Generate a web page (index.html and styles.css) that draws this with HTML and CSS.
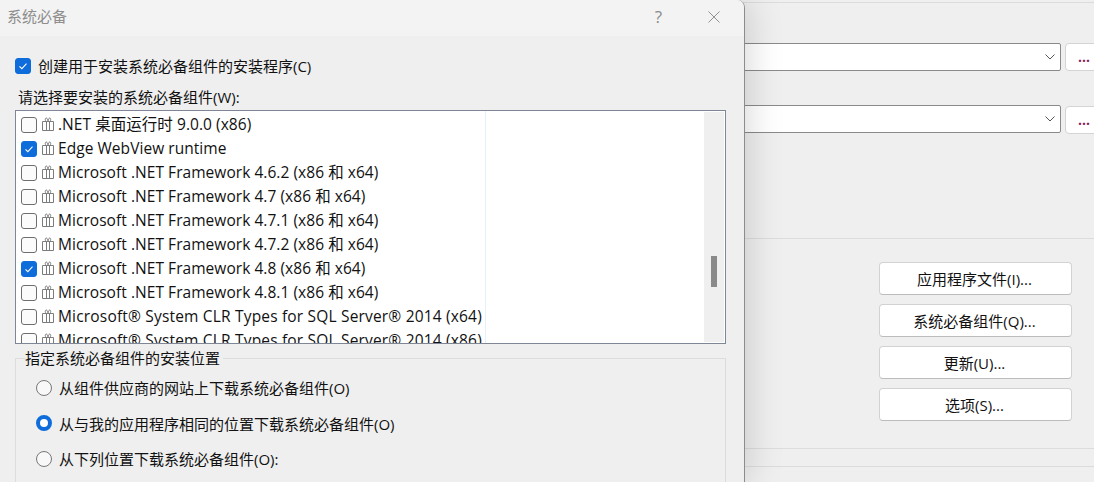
FILE: index.html
```html
<!DOCTYPE html>
<html lang="zh-CN">
<head>
<meta charset="utf-8">
<title>系统必备</title>
<link rel="stylesheet" href="styles.css">
</head>
<body>
<svg class="defs" width="0" height="0" aria-hidden="true">
  <symbol id="gift" viewBox="0 0 12 14">
    <path d="M.5 4.500h11v9H.5zM4.500 4.500v9M7.500 4.500v9M4 4.500C2.800 3 3.200 .8 4.400 1 5.400 1.200 5.800 3 6 4.500 6.200 3 6.600 1.200 7.600 1 8.800 .8 9.200 3 8 4.500" fill="none" stroke="#7c7c7c" stroke-width="1"/>
  </symbol>
  <symbol id="tick" viewBox="0 0 16 16">
    <path d="M4 8.300l2.700 2.700L12 5.400" fill="none" stroke="#fff" stroke-width="1.200"/>
  </symbol>
</svg>
<div class="window">
  <section class="back-top">
    <div class="combo-row">
      <div class="combo"><svg class="chev" viewBox="0 0 10 6"><path d="M.5.5L5 5 9.500.5" fill="none" stroke="#555" stroke-width="1"/></svg></div>
      <div class="dots">...</div>
    </div>
    <div class="combo-row second">
      <div class="combo"><svg class="chev" viewBox="0 0 10 6"><path d="M.5.5L5 5 9.500.5" fill="none" stroke="#555" stroke-width="1"/></svg></div>
      <div class="dots">...</div>
    </div>
  </section>
  <section class="back-buttons">
    <div class="btn">应用程序文件(I)...</div>
    <div class="btn">系统必备组件(Q)...</div>
    <div class="btn">更新(U)...</div>
    <div class="btn">选项(S)...</div>
  </section>
  <section class="back-strip"></section>
  <section class="back-end"></section>

  <div class="dialog">
    <header class="titlebar">
      <span class="title">系统必备</span>
      <span class="help">?</span>
      <svg class="close" viewBox="0 0 13 13"><path d="M.5.5l12 12M12.500.5l-12 12" fill="none" stroke="#8a8a8a" stroke-width="1"/></svg>
    </header>
    <div class="dialog-body">
      <div class="create">
        <span class="cb on big"><svg><use href="#tick"/></svg></span>
        <span>创建用于安装系统必备组件的安装程序(C)</span>
      </div>
      <div class="prompt">请选择要安装的系统必备组件(W):</div>
      <div class="list">
        <div class="rows">
          <div class="row"><span class="cb"></span><svg class="gift"><use href="#gift"/></svg><span>.NET 桌面运行时 9.0.0 (x86)</span></div>
          <div class="row"><span class="cb on"><svg><use href="#tick"/></svg></span><svg class="gift"><use href="#gift"/></svg><span>Edge WebView runtime</span></div>
          <div class="row"><span class="cb"></span><svg class="gift"><use href="#gift"/></svg><span>Microsoft .NET Framework 4.6.2 (x86 和 x64)</span></div>
          <div class="row"><span class="cb"></span><svg class="gift"><use href="#gift"/></svg><span>Microsoft .NET Framework 4.7 (x86 和 x64)</span></div>
          <div class="row"><span class="cb"></span><svg class="gift"><use href="#gift"/></svg><span>Microsoft .NET Framework 4.7.1 (x86 和 x64)</span></div>
          <div class="row"><span class="cb"></span><svg class="gift"><use href="#gift"/></svg><span>Microsoft .NET Framework 4.7.2 (x86 和 x64)</span></div>
          <div class="row"><span class="cb on"><svg><use href="#tick"/></svg></span><svg class="gift"><use href="#gift"/></svg><span>Microsoft .NET Framework 4.8 (x86 和 x64)</span></div>
          <div class="row"><span class="cb"></span><svg class="gift"><use href="#gift"/></svg><span>Microsoft .NET Framework 4.8.1 (x86 和 x64)</span></div>
          <div class="row"><span class="cb"></span><svg class="gift"><use href="#gift"/></svg><span class="wide">Microsoft® System CLR Types for SQL Server® 2014 (x64)</span></div>
          <div class="row"><span class="cb"></span><svg class="gift"><use href="#gift"/></svg><span class="wide">Microsoft® System CLR Types for SQL Server® 2014 (x86)</span></div>
        </div>
        <div class="scrollbar"><div class="thumb"></div></div>
      </div>
      <fieldset class="group">
        <legend>指定系统必备组件的安装位置</legend>
        <div class="radio"><span class="dot"></span><span>从组件供应商的网站上下载系统必备组件(O)</span></div>
        <div class="radio"><span class="dot on"></span><span>从与我的应用程序相同的位置下载系统必备组件(O)</span></div>
        <div class="radio"><span class="dot"></span><span>从下列位置下载系统必备组件(O):</span></div>
      </fieldset>
    </div>
  </div>
</div>
</body>
</html>
```
FILE: styles.css
```css
* { box-sizing: border-box; }
html, body { margin: 0; height: 100%; overflow: hidden; }
body {
  font-family: "Open Sans", "Noto Sans CJK SC", sans-serif;
  font-size: 15px;
  color: #111;
  background: #efefef;
}
.defs { position: absolute; }
.window { position: relative; width: 1094px; height: 482px; overflow: hidden; }

.back-top {
  margin-top: 2px;
  height: 237px;
  padding: 40px 0 0 0;
  border-top: 1px solid #dcdcdc;
  border-bottom: 1px solid #dcdcdc;
}
.combo-row { display: flex; align-items: flex-start; gap: 4px; height: 28px; }
.combo-row.second { margin-top: 34px; }
.combo {
  position: relative;
  flex: none;
  width: 1061px;
  height: 28px;
  background: #fff;
  border: 1px solid #8a8a8a;
  border-radius: 2px;
}
.chev { position: absolute; right: 5px; top: 10px; width: 10px; height: 6px; }
.dots {
  flex: none;
  width: 60px;
  height: 28px;
  background: #fff;
  border: 1px solid #d4d4d4;
  border-radius: 4px;
  color: #8a1f5a;
  line-height: 26px;
  padding-left: 12px;
  font-weight: 700;
  font-size: 14px;
}
.combo-row.second .dots { margin-top: 1px; }
.back-buttons {
  display: flex;
  flex-direction: column;
  align-items: flex-end;
  gap: 9px;
  height: 210px;
  padding: 23px 22px 0 0;
  border-bottom: 1px solid #dcdcdc;
}
.btn {
  width: 193px;
  height: 33px;
  background: #fff;
  border: 1px solid #d2d2d2;
  border-bottom-color: #bcbcbc;
  border-radius: 4px;
  text-align: center;
  line-height: 32px;
  padding-right: 2px;
}
.back-strip { height: 18px; border-bottom: 1px solid #dcdcdc; }
.back-end { height: 20px; }

.dialog {
  position: absolute;
  left: 0;
  top: 0;
  width: 745px;
  height: 482px;
  background: #efefef;
  border-right: 1px solid #8c8c8c;
  border-top-right-radius: 8px;
  box-shadow: 2px 0 36px rgba(0, 0, 0, .17);
  overflow: hidden;
}
.titlebar {
  display: flex;
  align-items: center;
  height: 36px;
  background: #f3f3f3;
  padding-left: 7px;
  padding-right: 24px;
}
.title { color: #8e8e8e; font-size: 15px; line-height: 30px; flex: 1; margin-bottom: 5px; }
.help { color: #8a8a8a; font-size: 17px; line-height: 30px; margin-right: 46px; margin-bottom: 3px; }
.close { width: 12px; height: 12px; margin-bottom: 2px; }
.dialog-body { padding: 19px 18px 0 15px; }
.create { display: flex; align-items: center; gap: 7px; height: 22px; line-height: 20px; }
.prompt { margin: 10px 0 0 3px; height: 22px; line-height: 20px; }
.list {
  position: relative;
  height: 234px;
  margin-top: 1px;
  background: #fff;
  border: 1px solid #7f8796;
  overflow: hidden;
  background-image: linear-gradient(#e4f1fa, #e4f1fa);
  background-size: 1px 100%;
  background-position: 469px 0;
  background-repeat: no-repeat;
}
.rows { padding: 1px 0 0 5px; font-size: 15.500px; letter-spacing: .05px; }
.row { display: flex; align-items: center; height: 24px; line-height: 24px; white-space: nowrap; }
.wide { letter-spacing: .18px; }
.cb {
  flex: none;
  display: block;
  width: 16px;
  height: 16px;
  background: #fbfbfb;
  border: 1px solid #6e6e6e;
  border-radius: 3px;
  margin-right: 5px;
  margin-top: 2px;
}
.cb.on { background: #0f6cdb; border-color: #0f6cdb; }
.cb svg { display: block; width: 14px; height: 14px; }
.cb.big { margin-right: 0; margin-top: 0; }
.gift { flex: none; width: 12px; height: 14px; margin-right: 4px; }
.scrollbar {
  position: absolute;
  right: 1px;
  top: 1px;
  bottom: 1px;
  width: 20px;
  background: #efefef;
}
.thumb {
  position: absolute;
  left: 7px;
  top: 144px;
  width: 6px;
  height: 31px;
  background: #8a8a8a;
}
.group {
  height: 200px;
  margin: 4px 0 0;
  padding: 0;
  border: 1px solid #dcdcdc;
  min-width: 0;
}
.group legend { padding: 0 3px 0 0; margin-left: 9px; line-height: 20px; }
.radio { display: flex; align-items: center; gap: 7px; height: 35.500px; padding-left: 20px; }
.radio:first-of-type { margin-top: 2px; }
.dot {
  flex: none;
  width: 16px;
  height: 16px;
  border: 1px solid #777;
  border-radius: 50%;
  background: #f8f8f8;
}
.dot.on { border: 4.500px solid #0f6cdb; background: #fff; }
```
